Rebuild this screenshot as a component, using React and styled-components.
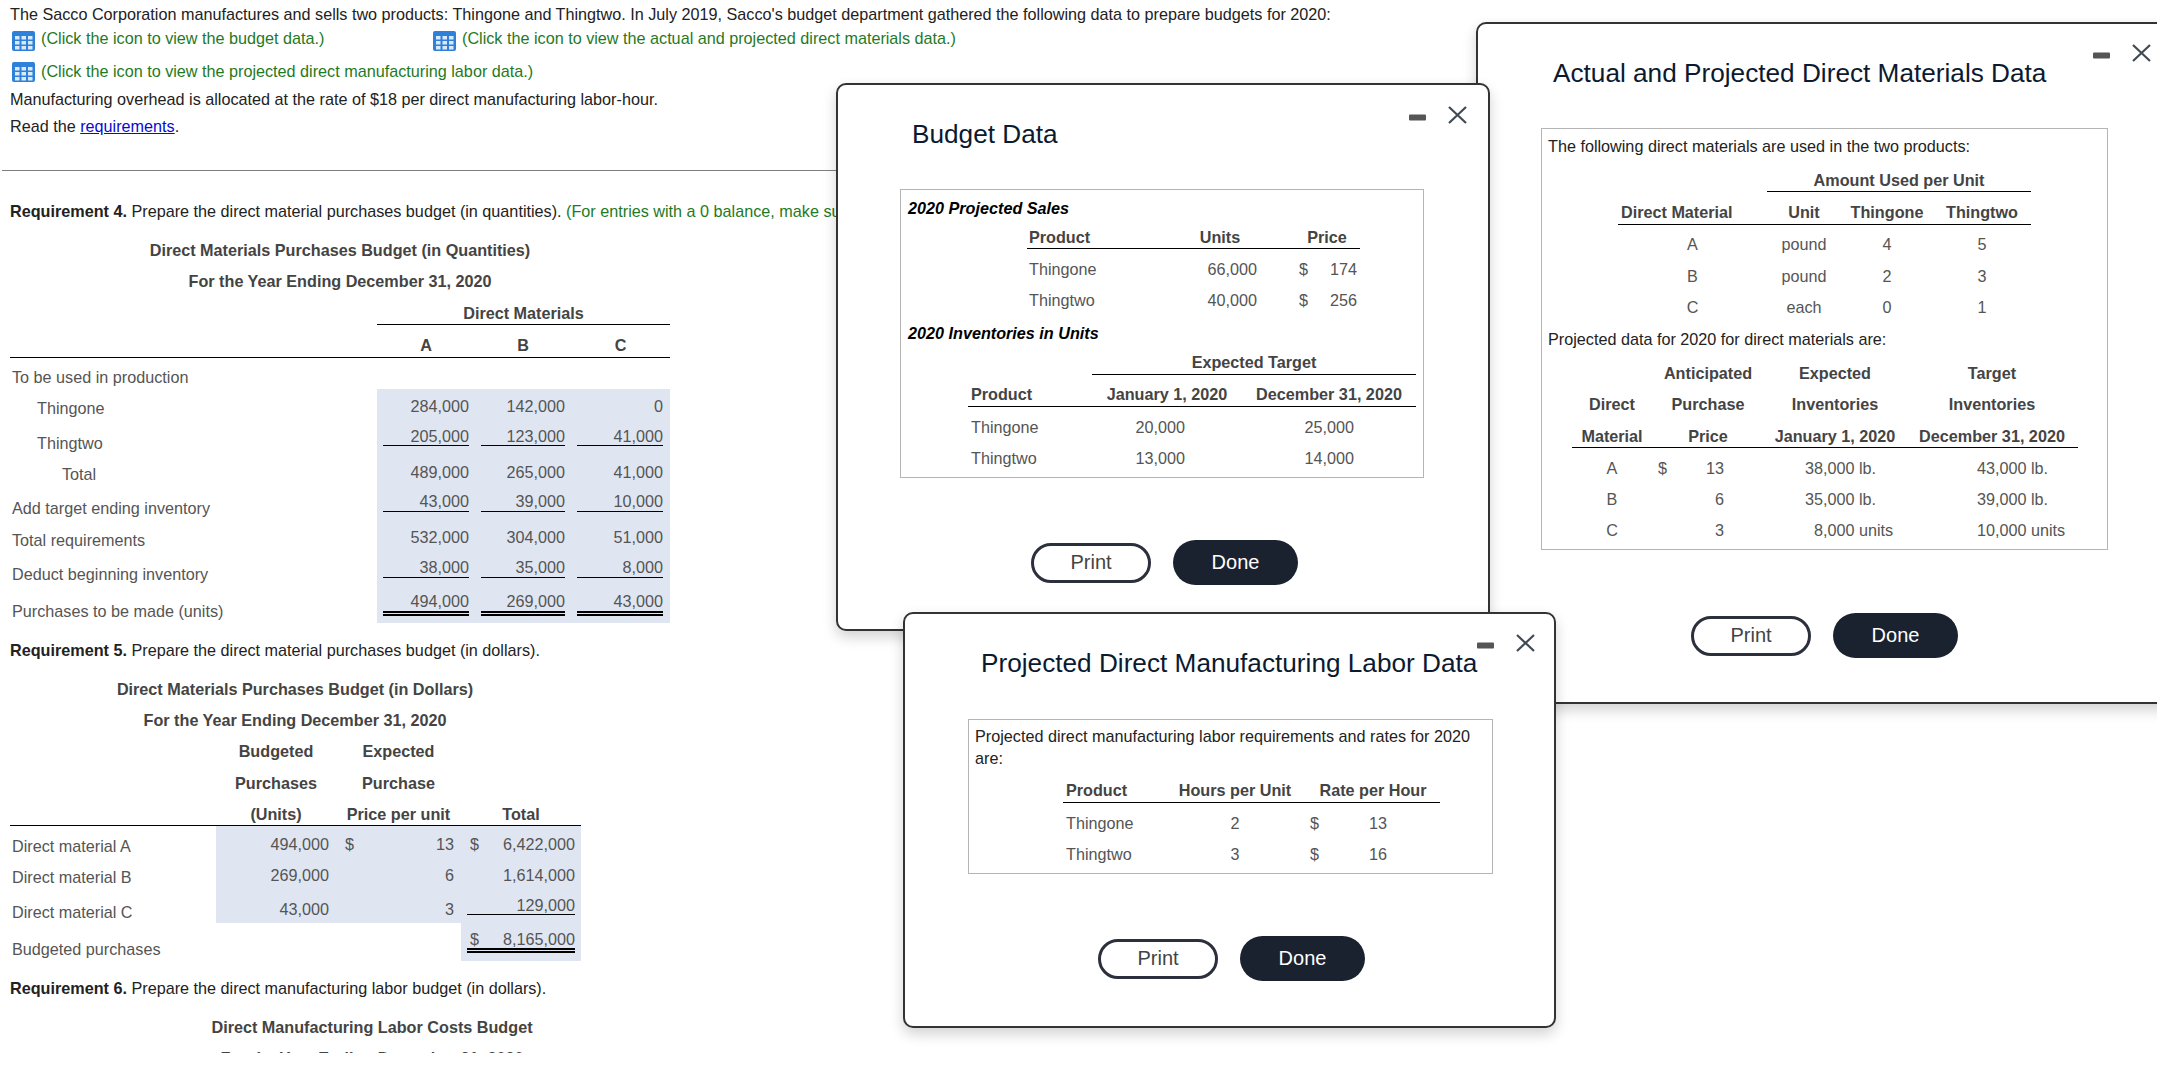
import React from "react";
import styled, { createGlobalStyle } from "styled-components";

const Global = createGlobalStyle`
  html, body { margin: 0; padding: 0; width: 100%; height: 100%; overflow: hidden; background: #fff; }
  body { font-family: "Liberation Sans", Arial, sans-serif; font-size: 16.2px; line-height: 20px; color: #222; }
  * { box-sizing: border-box; }
`;

const Desk = styled.div`position: relative; width: 2157px; height: 1067px; overflow: hidden;`;
const Sheet = styled.main`height: 1053px; overflow: hidden; padding: 4px 0 0 10px;`;
const Para = styled.p`margin: ${p => p.$top || 0}px 0 0; white-space: nowrap; height: 18px;`;
const Hint = styled.span`color: #1f7a1f;`;
const LinkText = styled.a`color: #0a0ad0; text-decoration: underline;`;
const IconLine = styled.div`display: flex; height: 18px; margin-top: ${p => p.$top}px; white-space: nowrap;`;
const IconItem = styled.div`display: flex; width: ${p => p.$w || 421}px; color: #1f7a1f;`;
const Grid = styled.svg`flex: none; width: 23px; height: 20px; margin: ${p => p.$drop}px 6px 0 2px;`;
const Divider = styled.hr`border: 0; height: 1px; background: #7d7d82; margin: 36px 0 0 -8px; width: 1400px;`;
const Title = styled.div`
  font-weight: 700; color: #444; text-align: center; width: ${p => p.$w}px; height: 18px;
  margin-top: ${p => p.$top}px; white-space: nowrap;
`;
const TableBlock = styled.div`width: ${p => p.$w}px; margin-top: ${p => p.$top || 0}px; margin-left: ${p => p.$left || 0}px;`;
const Row = styled.div`
  display: grid; grid-template-columns: ${p => p.$cols}; grid-template-rows: minmax(0, 1fr); height: ${p => p.$h}px;
  ${p => p.$rule && "border-bottom: 1px solid #000;"}
`;
const Head = styled.div`
  font-weight: 700; color: #444; white-space: nowrap; min-height: 0;
  text-align: ${p => p.$align || "center"};
  padding-top: ${p => p.$t}px; padding-left: ${p => p.$l || 0}px;
  grid-column: ${p => p.$span || "auto"};
  ${p => p.$rule && "border-bottom: 1px solid #000;"}
`;
const Label = styled.div`
  color: #555; white-space: nowrap; min-height: 0; text-align: ${p => p.$align || "left"};
  padding-top: ${p => p.$t}px; padding-left: ${p => p.$l || 0}px;
`;
const Value = styled.div`
  color: #555; white-space: nowrap; min-height: 0; text-align: ${p => p.$align || "right"};
  padding-top: ${p => p.$t}px; padding-right: ${p => p.$r || 0}px; padding-left: ${p => p.$l || 0}px;
`;
const Shade = styled.div`
  background: #dfe6f2; min-width: 0; min-height: 0;
  padding: 0 ${p => p.$r}px ${p => p.$b || 0}px ${p => p.$l}px;
`;
const Figure = styled.div`
  height: 100%; color: #555; text-align: right; white-space: nowrap;
  padding-top: ${p => p.$t}px;
  border-bottom: ${p => (p.$rule === "double" ? "5px double #000" : p.$rule ? "1px solid #000" : "0")};
`;
const Money = styled.div`
  display: flex; height: 100%; min-height: 0; color: #555; white-space: nowrap;
  padding: ${p => p.$t}px ${p => p.$r || 0}px 0 ${p => p.$l || 0}px;
  border-bottom: ${p => (p.$rule === "double" ? "5px double #000" : p.$rule ? "1px solid #000" : "0")};
`;
const Amount = styled.span`margin-left: auto;`;

const Modal = styled.section`
  position: absolute; left: ${p => p.$x}px; top: ${p => p.$y}px; width: ${p => p.$w}px; height: ${p => p.$h}px;
  background: #fff; border: 2px solid #333; border-radius: 10px;
  box-shadow: 0 6px 14px rgba(0,0,0,.18); padding-top: 34px; z-index: ${p => p.$z};
`;
const ModalTitle = styled.h2`
  margin: 0 0 0 ${p => p.$l}px; font-size: 26.2px; line-height: 30px; font-weight: 400; color: #0c1a30; white-space: nowrap;
`;
const Controls = styled.svg`position: absolute; left: ${p => p.$l}px; top: ${p => p.$t}px; width: 60px; height: 18px;`;
const Box = styled.div`
  margin: ${p => p.$top || 40}px 0 0 ${p => p.$l}px; width: ${p => p.$w}px; height: ${p => p.$h}px;
  border: 1px solid #b5b5b5; padding-top: ${p => p.$t || 0}px;
`;
const BoxHead = styled.div`
  font-weight: 700; font-style: italic; color: #000; height: 18px; margin: ${p => p.$top || 0}px 0 0 7px;
  white-space: nowrap;
`;
const BoxText = styled.p`
  margin: ${p => p.$top || 0}px 6px 0; color: #222; height: 18px; white-space: nowrap;
`;
const BoxWrap = styled.p`margin: 0 6px 0; color: #222; line-height: 22px; height: 43px;`;
const Actions = styled.div`display: flex; align-items: center; gap: 22px; margin: ${p => p.$top}px 0 0 ${p => p.$l || 193}px;`;
const PrintBtn = styled.button`
  width: 120px; height: 40px; border-radius: 20px; border: 3px solid #2b303c; background: #fff; padding: 0;
  font: 20px "Liberation Sans", Arial, sans-serif; color: #444;
`;
const DoneBtn = styled.button`
  width: 125px; height: 45px; border-radius: 23px; border: 0; background: #1b222f; padding: 0;
  font: 20px "Liberation Sans", Arial, sans-serif; color: #fff;
`;

const TableIcon = ({ drop }) => (
  <Grid $drop={drop} viewBox="0 0 23 20">
    <rect width="23" height="20" rx="2" fill="#2f80d8" />
    {[5, 10, 15].map(y => [3, 9.5, 16].map(x => <rect key={x + "-" + y} x={x} y={y} width="4.5" height="3.5" fill="#d9e9fa" />))}
  </Grid>
);
const WindowButtons = ({ l, t }) => (
  <Controls $l={l} $t={t} viewBox="0 0 60 18">
    <rect x="0" y="8.5" width="17" height="6" rx="1" fill="#555" />
    <path d="M40 1 L57 17 M57 1 L40 17" stroke="#3f4a55" strokeWidth="2.2" fill="none" />
  </Controls>
);
const Buttons = ({ top, l }) => (
  <Actions $top={top} $l={l}><PrintBtn>Print</PrintBtn><DoneBtn>Done</DoneBtn></Actions>
);

const qCols = "367px 98px 96px 99px";
const qRows = [
  { label: "Thingone", l: 27, h: 30, lt: 9, t: 7, v: ["284,000", "142,000", "0"] },
  { label: "Thingtwo", l: 27, h: 27, lt: 14, t: 7, v: ["205,000", "123,000", "41,000"], rule: "single" },
  { label: "Total", l: 52, h: 38, lt: 18, t: 16, v: ["489,000", "265,000", "41,000"] },
  { label: "Add target ending inventory", l: 2, h: 28, lt: 14, t: 7, v: ["43,000", "39,000", "10,000"], rule: "single" },
  { label: "Total requirements", l: 2, h: 38, lt: 18, t: 15, v: ["532,000", "304,000", "51,000"] },
  { label: "Deduct beginning inventory", l: 2, h: 28, lt: 14, t: 7, v: ["38,000", "35,000", "8,000"], rule: "single" },
  { label: "Purchases to be made (units)", l: 2, h: 45, lt: 23, t: 13, b: 7, v: ["494,000", "269,000", "43,000"], rule: "double" },
];
const qPad = [[6, 6], [6, 6], [6, 7]];

const dCols = "206px 120px 125px 120px";
const PriceCell = ({ t, sign, value }) => (
  <Shade $l={9} $r={7}><Money $t={t}>{sign && <span>$</span>}<Amount>{value}</Amount></Money></Shade>
);

const salesCols = "153px 80px 34px 66px";
const invCols = "124px 150px 174px";
const matCols = "149px 74px 92px 98px";
const projCols = "80px 112px 142px 172px";
const laborCols = "112px 120px 11px 134px";

export default function App() {
  return (
    <Desk>
      <Global />
      <Sheet>
        <Para>The Sacco Corporation manufactures and sells two products: Thingone and Thingtwo. In July 2019, Sacco's budget department gathered the following data to prepare budgets for 2020:</Para>
        <IconLine $top={6}>
          <IconItem><TableIcon drop={3} /><span>(Click the icon to view the budget data.)</span></IconItem>
          <IconItem $w={800}><TableIcon drop={3} /><span>(Click the icon to view the actual and projected direct materials data.)</span></IconItem>
        </IconLine>
        <IconLine $top={15}>
          <IconItem $w={800}><TableIcon drop={1} /><span>(Click the icon to view the projected direct manufacturing labor data.)</span></IconItem>
        </IconLine>
        <Para $top={10}>Manufacturing overhead is allocated at the rate of $18 per direct manufacturing labor-hour.</Para>
        <Para $top={9}>Read the <LinkText>requirements</LinkText>.</Para>
        <Divider />
        <Para $top={30}><b>Requirement 4.</b> Prepare the direct material purchases budget (in quantities). <Hint>(For entries with a 0 balance, make sure to enter "0" in the appropriate cell.)</Hint></Para>

        <Title $w={660} $top={21}>Direct Materials Purchases Budget (in Quantities)</Title>
        <Title $w={660} $top={13}>For the Year Ending December 31, 2020</Title>
        <TableBlock $w={660} $top={8}>
          <Row $cols={qCols} $h={28}>
            <span />
            <Head $t={6} $span="span 3" $rule>Direct Materials</Head>
          </Row>
          <Row $cols={qCols} $h={33} $rule>
            <span />
            <Head $t={10}>A</Head><Head $t={10}>B</Head><Head $t={10}>C</Head>
          </Row>
          <Row $cols={qCols} $h={31}><Label $t={9} $l={2}>To be used in production</Label></Row>
          {qRows.map(r => (
            <Row key={r.label} $cols={qCols} $h={r.h}>
              <Label $t={r.lt} $l={r.l}>{r.label}</Label>
              {r.v.map((v, i) => (
                <Shade key={i} $l={qPad[i][0]} $r={qPad[i][1]} $b={r.b}>
                  <Figure $t={r.t} $rule={r.rule}>{v}</Figure>
                </Shade>
              ))}
            </Row>
          ))}
        </TableBlock>

        <Para $top={17}><b>Requirement 5.</b> Prepare the direct material purchases budget (in dollars).</Para>
        <Title $w={570} $top={21}>Direct Materials Purchases Budget (in Dollars)</Title>
        <Title $w={570} $top={13}>For the Year Ending December 31, 2020</Title>
        <TableBlock $w={571}>
          <Row $cols={dCols} $h={31}><span /><Head $t={13}>Budgeted</Head><Head $t={13}>Expected</Head></Row>
          <Row $cols={dCols} $h={32}><span /><Head $t={14}>Purchases</Head><Head $t={14}>Purchase</Head></Row>
          <Row $cols={dCols} $h={35} $rule>
            <span /><Head $t={13}>(Units)</Head><Head $t={13}>Price per unit</Head><Head $t={13}>Total</Head>
          </Row>
          <Row $cols={dCols} $h={33}>
            <Label $t={10} $l={2}>Direct material A</Label>
            <Shade $l={0} $r={7}><Figure $t={8}>494,000</Figure></Shade>
            <PriceCell t={8} sign value="13" />
            <Shade $l={6} $r={6}><Money $t={8} $l={3}><span>$</span><Amount>6,422,000</Amount></Money></Shade>
          </Row>
          <Row $cols={dCols} $h={33}>
            <Label $t={8} $l={2}>Direct material B</Label>
            <Shade $l={0} $r={7}><Figure $t={6}>269,000</Figure></Shade>
            <PriceCell t={6} value="6" />
            <Shade $l={6} $r={6}><Figure $t={6}>1,614,000</Figure></Shade>
          </Row>
          <Row $cols={dCols} $h={31}>
            <Label $t={10} $l={2}>Direct material C</Label>
            <Shade $l={0} $r={7}><Figure $t={7}>43,000</Figure></Shade>
            <PriceCell t={7} value="3" />
            <Shade $l={6} $r={6} $b={8}><Figure $t={3} $rule="single">129,000</Figure></Shade>
          </Row>
          <Row $cols={dCols} $h={38}>
            <Label $t={16} $l={2}>Budgeted purchases</Label>
            <span /><span />
            <Shade $l={6} $r={6} $b={8}><Money $t={6} $l={3} $rule="double"><span>$</span><Amount>8,165,000</Amount></Money></Shade>
          </Row>
        </TableBlock>

        <Para $top={17}><b>Requirement 6.</b> Prepare the direct manufacturing labor budget (in dollars).</Para>
        <Title $w={724} $top={21}>Direct Manufacturing Labor Costs Budget</Title>
        <Title $w={724} $top={13}>For the Year Ending December 31, 2020</Title>
      </Sheet>

      <Modal $x={1476} $y={22} $w={730} $h={682} $z={1}>
        <ModalTitle $l={75}>Actual and Projected Direct Materials Data</ModalTitle>
        <WindowButtons l={615} t={20} />
        <Box $l={63} $w={567} $h={422}>
          <BoxText $top={7}>The following direct materials are used in the two products:</BoxText>
          <TableBlock $w={413} $left={76}>
            <Row $cols={matCols} $h={38}><span /><Head $t={16} $span="span 3" $rule>Amount Used per Unit</Head></Row>
            <Row $cols={matCols} $h={33} $rule>
              <Head $t={10} $align="left" $l={3}>Direct Material</Head><Head $t={10}>Unit</Head><Head $t={10}>Thingone</Head><Head $t={10}>Thingtwo</Head>
            </Row>
            {[["A", "pound", "4", "5", 9], ["B", "pound", "2", "3", 10], ["C", "each", "0", "1", 10]].map(r => (
              <Row key={r[0]} $cols={matCols} $h={31}>
                {r.slice(0, 4).map((c, i) => <Value key={i} $t={r[4]} $align="center">{c}</Value>)}
              </Row>
            ))}
          </TableBlock>
          <BoxText $top={11}>Projected data for 2020 for direct materials are:</BoxText>
          <TableBlock $w={506} $left={30}>
            <Row $cols={projCols} $h={38}><span /><Head $t={16}>Anticipated</Head><Head $t={16}>Expected</Head><Head $t={16}>Target</Head></Row>
            <Row $cols={projCols} $h={32}><Head $t={9}>Direct</Head><Head $t={9}>Purchase</Head><Head $t={9}>Inventories</Head><Head $t={9}>Inventories</Head></Row>
            <Row $cols={projCols} $h={31} $rule><Head $t={9}>Material</Head><Head $t={9}>Price</Head><Head $t={9}>January 1, 2020</Head><Head $t={9}>December 31, 2020</Head></Row>
            {[["A", true, "13", "38,000 lb.", 41, "43,000 lb."], ["B", false, "6", "35,000 lb.", 41, "39,000 lb."], ["C", false, "3", "8,000 units", 50, "10,000 units"]].map(r => (
              <Row key={r[0]} $cols={projCols} $h={31}>
                <Value $t={10} $align="center">{r[0]}</Value>
                <Money $t={10} $l={6} $r={40}>{r[1] && <span>$</span>}<Amount>{r[2]}</Amount></Money>
                <Value $t={10} $align="left" $l={r[4]}>{r[3]}</Value>
                <Value $t={10} $align="left" $l={71}>{r[5]}</Value>
              </Row>
            ))}
          </TableBlock>
        </Box>
        <Buttons top={63} l={213} />
      </Modal>

      <Modal $x={836} $y={83} $w={654} $h={548} $z={2}>
        <ModalTitle $l={74}>Budget Data</ModalTitle>
        <WindowButtons l={571} t={21} />
        <Box $l={62} $w={524} $h={289} $t={8}>
          <BoxHead>2020 Projected Sales</BoxHead>
          <TableBlock $w={333} $left={126}>
            <Row $cols={salesCols} $h={33} $rule>
              <Head $t={11} $align="left" $l={2}>Product</Head><Head $t={11}>Units</Head><span /><Head $t={11}>Price</Head>
            </Row>
            {[["Thingone", "66,000", "174"], ["Thingtwo", "40,000", "256"]].map(r => (
              <Row key={r[0]} $cols={salesCols} $h={31}>
                <Label $t={10} $l={2}>{r[0]}</Label>
                <Value $t={10} $r={3}>{r[1]}</Value>
                <span />
                <Money $t={10} $l={5} $r={3}><span>$</span><Amount>{r[2]}</Amount></Money>
              </Row>
            ))}
          </TableBlock>
          <BoxHead $top={12}>2020 Inventories in Units</BoxHead>
          <TableBlock $w={448} $left={67}>
            <Row $cols={invCols} $h={34}><span /><Head $t={11} $span="span 2" $rule>Expected Target</Head></Row>
            <Row $cols={invCols} $h={32} $rule>
              <Head $t={9} $align="left" $l={3}>Product</Head><Head $t={9}>January 1, 2020</Head><Head $t={9}>December 31, 2020</Head>
            </Row>
            {[["Thingone", "20,000", "25,000"], ["Thingtwo", "13,000", "14,000"]].map(r => (
              <Row key={r[0]} $cols={invCols} $h={31}>
                <Label $t={10} $l={3}>{r[0]}</Label>
                <Value $t={10} $r={57}>{r[1]}</Value>
                <Value $t={10} $r={62}>{r[2]}</Value>
              </Row>
            ))}
          </TableBlock>
        </Box>
        <Buttons top={62} />
      </Modal>

      <Modal $x={903} $y={612} $w={653} $h={416} $z={3}>
        <ModalTitle $l={76}>Projected Direct Manufacturing Labor Data</ModalTitle>
        <WindowButtons l={572} t={20} />
        <Box $top={41} $l={63} $w={525} $h={155} $t={5}>
          <BoxWrap>Projected direct manufacturing labor requirements and rates for 2020 are:</BoxWrap>
          <TableBlock $w={377} $left={94}>
            <Row $cols={laborCols} $h={35} $rule>
              <Head $t={12} $align="left" $l={3}>Product</Head><Head $t={12}>Hours per Unit</Head><span /><Head $t={12}>Rate per Hour</Head>
            </Row>
            {[["Thingone", "2", "13"], ["Thingtwo", "3", "16"]].map(r => (
              <Row key={r[0]} $cols={laborCols} $h={31}>
                <Label $t={10} $l={3}>{r[0]}</Label>
                <Value $t={10} $align="center">{r[1]}</Value>
                <span />
                <Money $t={10} $l={4} $r={53}><span>$</span><Amount>{r[2]}</Amount></Money>
              </Row>
            ))}
          </TableBlock>
        </Box>
        <Buttons top={62} />
      </Modal>
    </Desk>
  );
}
